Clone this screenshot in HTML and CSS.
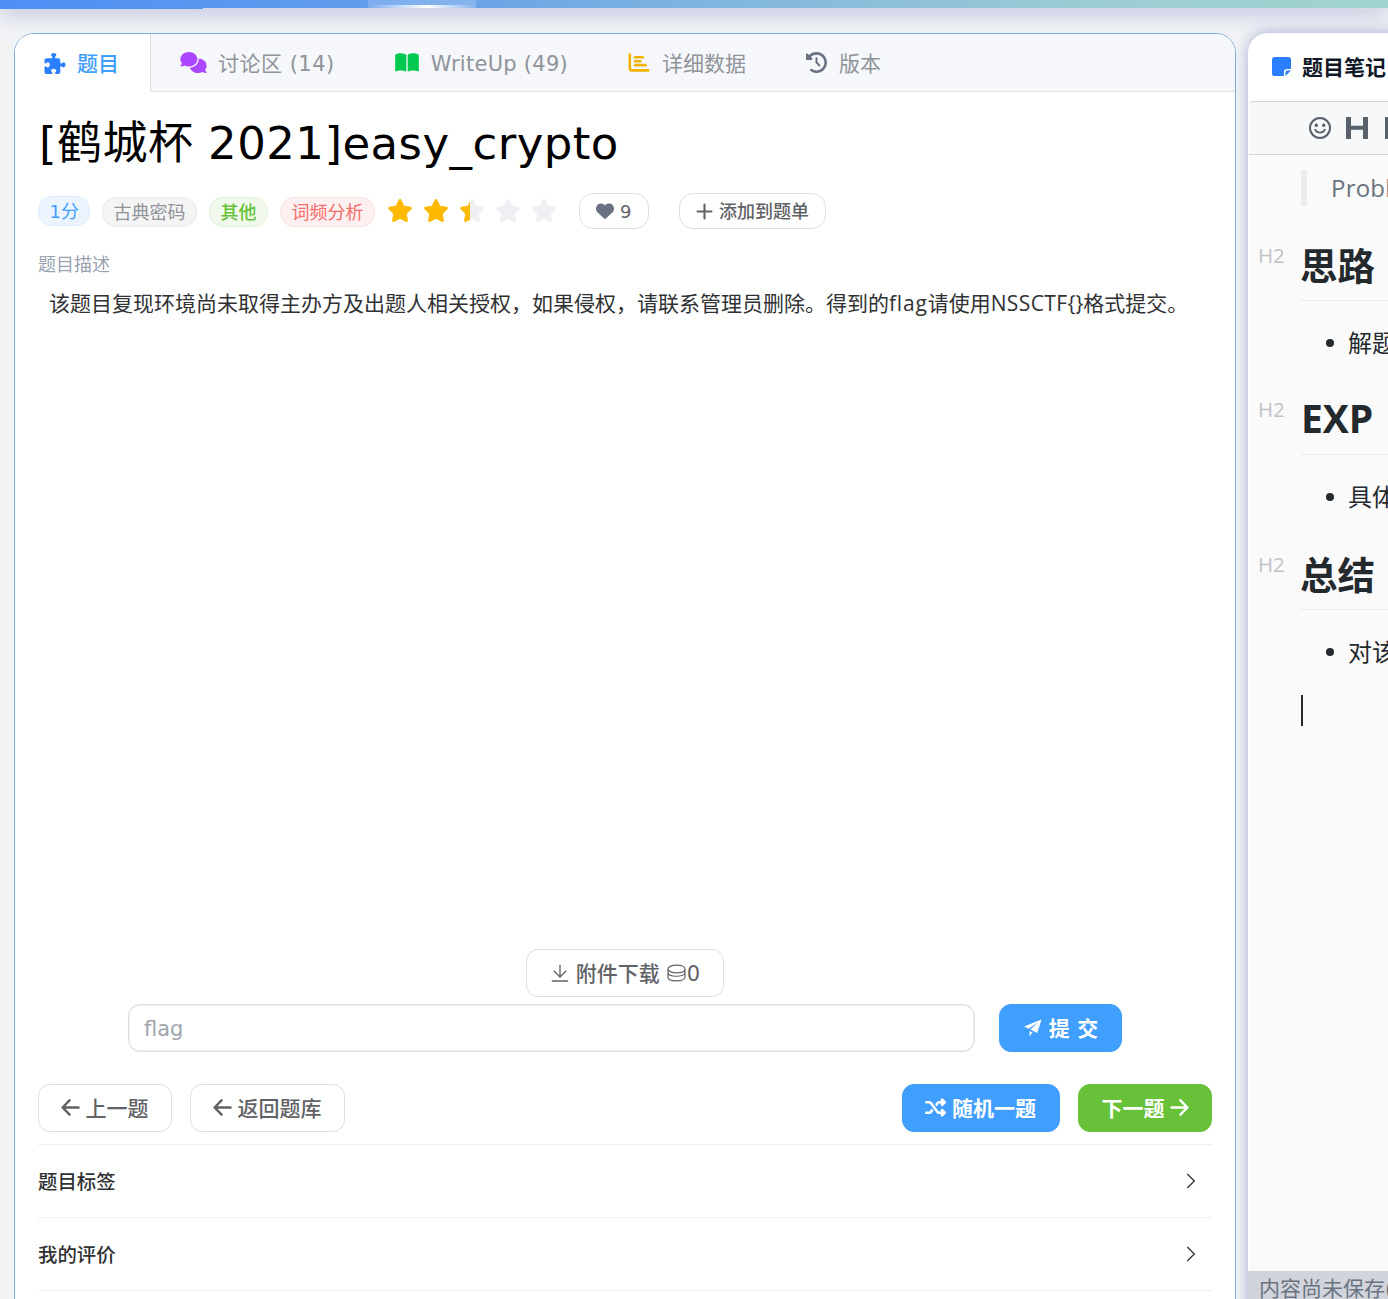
FILE: index.html
```html
<!DOCTYPE html>
<html lang="zh-CN">
<head>
<meta charset="utf-8">
<title>[鹤城杯 2021]easy_crypto</title>
<link rel="stylesheet" href="styles.css">
</head>
<body>
<svg class="defs" aria-hidden="true">
  <symbol id="star" viewBox="24 0 528 512"><path d="M316.9 18C311.6 7 300.4 0 288.1 0s-23.4 7-28.8 18L195 150.3 51.4 171.5c-12 1.8-22 10.2-25.7 21.7s-.7 24.2 7.9 32.7L137.8 329 113.2 474.7c-2 12 3 24.2 12.9 31.3s23 8 33.8 2.3l128.3-68.5 128.3 68.5c10.8 5.7 23.9 4.9 33.8-2.3s14.9-19.3 12.9-31.3L438.5 329 542.7 225.9c8.6-8.5 11.7-21.2 7.9-32.7s-13.7-19.9-25.7-21.7L381.2 150.3 316.9 18z"/></symbol>
  <symbol id="arrow" viewBox="0 0 20 20"><path d="M18.5 10H2.2M9 2.5 1.7 10 9 17.5" fill="none" stroke="currentColor" stroke-width="2.6" stroke-linecap="round" stroke-linejoin="round"/></symbol>
  <symbol id="chevron" viewBox="0 0 10 16"><path d="M1.3 1 8.3 8 1.3 15" fill="none" stroke="currentColor" stroke-width="1.3"/></symbol>
</svg>
<div class="topbar"><span class="topbar-line"></span><span class="topbar-active"></span></div>
<div class="page">
  <main class="problem">
    <nav class="tabs">
      <a class="tab active"><svg class="i-puzzle" viewBox="0 0 512 512"><path d="M192 104.8c0-9.2-5.8-17.3-13.2-22.8C167.2 73.3 160 61.3 160 48c0-26.5 28.7-48 64-48s64 21.5 64 48c0 13.3-7.2 25.3-18.8 34c-7.4 5.5-13.2 13.6-13.2 22.8c0 12.8 10.4 23.2 23.2 23.2H336c26.5 0 48 21.5 48 48v56.8c0 12.8 10.4 23.2 23.2 23.2c9.2 0 17.3-5.8 22.8-13.2c8.7-11.6 20.7-18.8 34-18.8c26.5 0 48 28.7 48 64s-21.5 64-48 64c-13.3 0-25.3-7.2-34-18.8c-5.5-7.4-13.6-13.2-22.8-13.2c-12.8 0-23.2 10.4-23.2 23.2V464c0 26.5-21.5 48-48 48H279.2c-12.8 0-23.2-10.4-23.2-23.2c0-9.2 5.8-17.3 13.2-22.8c11.6-8.7 18.8-20.7 18.8-34c0-26.5-28.7-48-64-48s-64 21.5-64 48c0 13.3 7.2 25.3 18.8 34c7.4 5.5 13.2 13.6 13.2 22.8c0 12.8-10.4 23.2-23.2 23.2H48c-26.5 0-48-21.5-48-48V343.2C0 330.4 10.4 320 23.2 320c9.2 0 17.3 5.8 22.8 13.2C54.7 344.8 66.7 352 80 352c26.5 0 48-28.7 48-64s-21.5-64-48-64c-13.3 0-25.3 7.2-34 18.8C40.5 250.2 32.4 256 23.2 256C10.4 256 0 245.6 0 232.8V176c0-26.5 21.5-48 48-48H168.8c12.8 0 23.2-10.4 23.2-23.2z"/></svg><span>题目</span></a>
      <a class="tab discuss"><svg class="i-comments" viewBox="0 0 640 512"><path d="M208 352c114.9 0 208-78.8 208-176S322.9 0 208 0S0 78.8 0 176c0 38.6 14.7 74.3 39.6 103.4c-3.5 9.4-8.7 17.7-14.2 24.7c-4.8 6.2-9.7 11-13.3 14.3c-1.8 1.6-3.3 2.9-4.3 3.7c-.5 .4-.9 .7-1.1 .8l-.2 .2C1 327.2-1.4 334.4 .8 340.9S9.1 352 16 352c21.8 0 43.8-5.6 62.1-12.5c9.2-3.5 17.8-7.4 25.2-11.4C134.1 343.3 169.8 352 208 352zM448 176c0 112.3-99.1 196.9-216.5 207C255.8 457.4 336.4 512 432 512c38.2 0 73.9-8.7 104.7-23.9c7.5 4 16 7.9 25.2 11.4c18.3 6.9 40.3 12.5 62.1 12.5c6.9 0 13.1-4.5 15.2-11.1c2.1-6.6-.2-13.8-5.8-17.9l-.2-.2c-.2-.2-.6-.4-1.1-.8c-1-.8-2.5-2-4.3-3.7c-3.6-3.3-8.5-8.1-13.3-14.3c-5.5-7-10.7-15.4-14.2-24.7c24.9-29 39.6-64.7 39.6-103.4c0-92.8-84.9-168.9-192.6-175.5c.4 5.1 .6 10.3 .6 15.5z"/></svg><span>讨论区 (14)</span></a>
      <a class="tab writeup"><svg class="i-book" viewBox="0 0 576 512"><path d="M249.6 471.5c10.8 3.8 22.4-4.1 22.4-15.5V78.6c0-4.2-1.6-8.4-5-11C247.4 52 202.4 32 144 32C93.5 32 46.3 45.3 18.1 56.1C6.8 60.5 0 71.7 0 83.8V454.1c0 11.9 12.8 20.2 24.1 16.5C55.6 460.1 105.5 448 144 448c33.9 0 79 14 105.6 23.5zm76.8 0C353 462 398.1 448 432 448c38.5 0 88.4 12.1 119.9 22.6c11.3 3.8 24.1-4.6 24.1-16.5V83.8c0-12.1-6.8-23.3-18.1-27.6C529.7 45.3 482.5 32 432 32c-58.4 0-103.4 20-123 35.6c-3.3 2.6-5 6.8-5 11V456c0 11.4 11.7 19.3 22.4 15.5z"/></svg><span>WriteUp (49)</span></a>
      <a class="tab"><svg class="i-chart" viewBox="0 0 512 512"><path d="M32 32c17.7 0 32 14.3 32 32V400c0 8.8 7.2 16 16 16H480c17.7 0 32 14.3 32 32s-14.3 32-32 32H80c-44.2 0-80-35.8-80-80V64C0 46.3 14.3 32 32 32zm96 96c0-17.7 14.3-32 32-32l192 0c17.7 0 32 14.3 32 32s-14.3 32-32 32l-192 0c-17.7 0-32-14.3-32-32zm32 64H288c17.7 0 32 14.3 32 32s-14.3 32-32 32H160c-17.7 0-32-14.3-32-32s14.3-32 32-32zm0 96H416c17.7 0 32 14.3 32 32s-14.3 32-32 32H160c-17.7 0-32-14.3-32-32s14.3-32 32-32z"/></svg><span>详细数据</span></a>
      <a class="tab"><svg class="i-history" viewBox="0 0 512 512"><path d="M75 75L41 41C25.9 25.9 0 36.6 0 57.9V168c0 13.3 10.7 24 24 24H134.1c21.4 0 32.1-25.9 17-41l-30.8-30.8C155 85.5 203 64 256 64c106 0 192 86 192 192s-86 192-192 192c-40.8 0-78.6-12.7-109.7-34.4c-14.5-10.1-34.4-6.6-44.6 7.9s-6.6 34.4 7.9 44.6C151.2 495 201.7 512 256 512c141.4 0 256-114.6 256-256S397.4 0 256 0C185.3 0 121.3 28.7 75 75zm181 53c-13.3 0-24 10.7-24 24V256c0 6.4 2.5 12.5 7 17l72 72c9.4 9.4 24.6 9.4 33.9 0s9.4-24.6 0-33.9l-65-65V152c0-13.3-10.7-24-24-24z"/></svg><span>版本</span></a>
    </nav>
    <div class="content">
      <h1>[鹤城杯 2021]easy_crypto</h1>
      <div class="meta">
        <span class="tag blue">1分</span><span class="tag gray">古典密码</span><span class="tag green">其他</span><span class="tag red">词频分析</span>
        <div class="stars">
          <svg class="star on"><use href="#star"/></svg><svg class="star on"><use href="#star"/></svg><span class="half"><svg class="star"><use href="#star"/></svg><svg class="star on clip"><use href="#star"/></svg></span><svg class="star"><use href="#star"/></svg><svg class="star"><use href="#star"/></svg>
        </div>
        <button class="pill like"><svg viewBox="0 0 512 512"><path d="M47.6 300.4L228.3 469.1c7.5 7 17.4 10.9 27.7 10.9s20.2-3.9 27.7-10.9L464.4 300.4c30.4-28.3 47.6-68 47.6-109.5v-5.8c0-69.9-50.5-129.5-119.4-141C347 36.5 300.6 51.4 268 84L256 96 244 84c-32.6-32.6-79-47.5-124.6-39.9C50.5 55.6 0 115.2 0 185.1v5.8c0 41.5 17.2 81.2 47.6 109.5z"/></svg><span>9</span></button>
        <button class="pill add"><svg viewBox="0 0 16 16"><path d="M8 1.5v13M1.5 8h13" fill="none" stroke="currentColor" stroke-width="2" stroke-linecap="round"/></svg><span>添加到题单</span></button>
      </div>
      <div class="label">题目描述</div>
      <p class="desc">该题目复现环境尚未取得主办方及出题人相关授权，如果侵权，请联系管理员删除。得到的<span class="word">flag</span>请使用<span class="code">NSSCTF</span>{}格式提交。</p>
      <div class="attach"><button class="btn"><svg class="i-down" viewBox="0 0 18 18"><path d="M9 .8v12M2.8 6.8 9 13l6.2-6.2M.8 17h16.4" fill="none" stroke="currentColor" stroke-width="1.3"/></svg><span>附件下载</span><svg class="i-coin" viewBox="0 0 19 18"><path d="M1 5c0-5.2 17-5.2 17 0S1 10.200 1 5v3.500c0 5 17 5 17 0V5M1 9v4c0 5.200 17 5.200 17 0V9" fill="none" stroke="currentColor" stroke-width="1.200"/></svg><span>0</span></button></div>
      <div class="submit-row"><div class="flag">flag</div><button class="btn primary submit"><svg viewBox="0 0 18 18"><path d="M17.600.4 0 7.400l4.600 2.300L14 3.200 6.400 10.600l6.800 3.400zM5.500 12v5.200l3-3.700z"/></svg><span>提 交</span></button></div>
      <div class="nav-row">
        <button class="btn prev"><svg class="i-arrow"><use href="#arrow"/></svg><span>上一题</span></button>
        <button class="btn back"><svg class="i-arrow"><use href="#arrow"/></svg><span>返回题库</span></button>
        <button class="btn primary random"><svg class="i-shuffle" viewBox="0 0 512 512"><path d="M403.8 34.4c12-5 25.7-2.2 34.9 6.9l64 64c6 6 9.4 14.1 9.4 22.6s-3.4 16.6-9.4 22.6l-64 64c-9.2 9.2-22.9 11.9-34.9 6.9s-19.8-16.6-19.8-29.6V160H352c-10.1 0-19.6 4.7-25.600 12.800L284 229.300 244 176l31.200-41.600C293.300 110.200 321.800 96 352 96h32V64c0-12.900 7.800-24.600 19.800-29.600zM164 282.700L204 336l-31.200 41.600C154.700 401.800 126.200 416 96 416H32c-17.700 0-32-14.300-32-32s14.300-32 32-32H96c10.100 0 19.600-4.700 25.600-12.800L164 282.700zm274.600 188c-9.200 9.200-22.900 11.900-34.900 6.900s-19.800-16.600-19.800-29.600V416H352c-30.200 0-58.700-14.200-76.800-38.400L121.600 172.800c-6-8.100-15.500-12.800-25.600-12.800H32c-17.700 0-32-14.300-32-32s14.300-32 32-32H96c30.200 0 58.700 14.200 76.800 38.400L326.400 339.200c6 8.100 15.500 12.800 25.600 12.800h32V320c0-12.900 7.800-24.600 19.800-29.600s25.700-2.200 34.900 6.900l64 64c6 6 9.400 14.100 9.400 22.600s-3.400 16.600-9.400 22.600l-64 64z"/></svg><span>随机一题</span></button>
        <button class="btn success next"><span>下一题</span><svg class="i-arrow flip"><use href="#arrow"/></svg></button>
      </div>
      <div class="collapse"><span>题目标签</span><svg><use href="#chevron"/></svg></div>
      <div class="collapse"><span>我的评价</span><svg><use href="#chevron"/></svg></div>
      <div class="collapse"></div>
    </div>
  </main>
  <aside class="notes">
    <header class="notes-head"><svg viewBox="0 0 20 20"><path d="M3 0h14a3 3 0 0 1 3 3v9.500h-4a3.500 3.500 0 0 0-3.500 3.500v4H3a3 3 0 0 1-3-3V3a3 3 0 0 1 3-3zM20 14.200 14.200 20v-3.800a2 2 0 0 1 2-2z"/></svg><span>题目笔记</span></header>
    <div class="toolbar">
      <svg class="i-smile" viewBox="0 0 22 22"><g fill="none" stroke="currentColor" stroke-width="2"><circle cx="11" cy="11" r="10"/><path d="M6.200 12.800c2.200 3.800 7.400 3.800 9.600 0" stroke-width="1.800" stroke-linecap="round"/></g><circle cx="7.300" cy="8.300" r="1.700"/><circle cx="14.700" cy="8.300" r="1.700"/></svg>
      <svg class="i-h" viewBox="0 0 22 22"><path d="M0 0h5v8.700h12V0h5v22h-5v-9.300H5V22H0z"/></svg>
      <svg class="i-b" viewBox="0 0 18 22"><path d="M0 0h10a6 6 0 0 1 5 10 6.500 6.500 0 0 1-4 12H0zM5 4v5h5a2 2 0 0 0 0-5zM5 13v5h6a2 2 0 0 0 0-5z"/></svg>
    </div>
    <div class="editor">
      <blockquote>Probl</blockquote>
      <section><i>H2</i><h2>思路</h2><ul><li>解题</li></ul></section>
      <section><i>H2</i><h2 class="latin">EXP</h2><ul><li>具体</li></ul></section>
      <section><i>H2</i><h2>总结</h2><ul><li>对该</li></ul></section>
      <div class="caret"></div>
    </div>
    <footer>内容尚未保存(</footer>
  </aside>
</div>
</body>
</html>
```
FILE: styles.css
```css
* { box-sizing: border-box; }
html, body { margin: 0; height: 1299px; overflow: hidden; }
body {
  background: #f2f3f5;
  font-family: "DejaVu Sans", "Noto Sans CJK SC", sans-serif;
  font-size: 21px;
  color: #303133;
}
svg { display: block; flex: none; fill: currentColor; overflow: visible; }
.defs { position: absolute; width: 0; height: 0; }
button { font: inherit; margin: 0; }

.topbar {
  position: relative;
  height: 9px;
  background: linear-gradient(90deg, #4d8ff5 0%, #629ceb 27%, #7eb4df 50%, #9dcdd3 80%, #a1d3cf 100%);
  box-shadow: 0 0 24px rgba(65, 85, 175, .65);
}
.topbar-line { position: absolute; left: 203px; right: 0; bottom: 0; height: 1px; background: #d9dde8; }
.topbar-active {
  position: absolute; left: 368px; bottom: 1px; width: 108px; height: 8px;
  background: linear-gradient(90deg, transparent, #fff 55%, transparent) bottom / 100% 3px no-repeat, rgba(255, 255, 255, .18);
}

.page { display: flex; gap: 12px; padding: 24px 0 0 14px; height: 1290px; }
.problem {
  width: 1222px; flex: none; height: 1300px;
  border: 1px solid #7db0e0; border-radius: 20px 20px 0 0;
  background: #fff; overflow: hidden;
}
.tabs { display: flex; height: 58px; background: #f5f7fa; border-bottom: 1px solid #e1e4eb; }
.tab { display: flex; align-items: center; gap: 12px; padding: 0 30px; color: #909399; line-height: 60px; white-space: nowrap; }
.tab span { height: 58px; }
.tab svg { height: 21px; }
.tab.active { width: 136px; height: 58px; gap: 11px; padding: 0 0 0 29px; background: #fff; color: #409eff; border-right: 1px solid #dcdfe6; font-weight: 500; }
.tab.discuss { padding-left: 29px; gap: 11px; letter-spacing: .5px; }
.tab.writeup { letter-spacing: .28px; }
.i-puzzle { width: 22px; color: #2b7fff; }
.i-comments { width: 27px; color: #ad46ff; }
.i-book { width: 24px; color: #00c950; }
.i-chart { width: 22px; color: #f0b100; }
.i-history { width: 21px; color: #6a7282; }

.content { padding: 0 23px; }
h1 { margin: 22px 0 0; padding-left: 1px; height: 60px; line-height: 60px; font-size: 45px; font-weight: 400; letter-spacing: .45px; color: #000; white-space: nowrap; }
.meta { display: flex; align-items: center; height: 36px; margin-top: 19px; }
.tag { height: 30px; line-height: 30px; border: 1px solid; border-radius: 14px; padding: 0 10.5px; font-size: 18px; margin: 2px 12px 0 0; white-space: nowrap; }
.blue { width: 52px; margin-top: 0; color: #409eff; background: #ecf5ff; border-color: #d9ecff; }
.gray { width: 95px; color: #909399; background: #f4f4f5; border-color: #e9e9eb; }
.green { width: 59px; color: #67c23a; background: #f0f9eb; border-color: #e1f3d8; font-weight: 500; }
.red { width: 95px; color: #f56c6c; background: #fef0f0; border-color: #fde2e2; }
.stars { display: flex; gap: 12px; margin: -1px 0 0 1px; color: #eff0f4; }
.star { width: 24px; height: 23px; }
.star.on { color: #ffb900; }
.half { position: relative; }
.clip { position: absolute; left: 0; top: 0; clip-path: inset(0 14px 0 0); }
.pill { display: flex; align-items: center; height: 36px; padding: 0 16px; border: 1px solid #dcdfe6; border-radius: 14px; background: #fff; color: #606266; font-size: 18px; line-height: 36px; font-weight: 500; }
.pill span { height: 34px; }
.like { width: 70px; margin-left: 23px; gap: 6px; }
.like svg { width: 18px; height: 18px; color: #6a7282; }
.add { width: 147px; margin-left: 30px; gap: 6px; white-space: nowrap; }
.add svg { width: 17px; height: 17px; }
.label { margin-top: 22px; height: 28px; line-height: 28px; font-size: 18px; color: #99a1af; }
.desc { margin: 7px 0 0 11px; height: 34px; font: 400 21px/34px "Open Sans", "Noto Sans CJK SC", sans-serif; white-space: nowrap; }
.word { letter-spacing: .8px; }
.code { letter-spacing: .4px; }
.attach { display: flex; justify-content: center; margin-top: 629px; }
.btn { display: flex; align-items: center; justify-content: center; gap: 7px; height: 48px; padding: 0; border: 1px solid #dcdfe6; border-radius: 12px; background: #fff; color: #606266; font-weight: 500; line-height: 48px; white-space: nowrap; }
.btn span { height: 46px; }
.attach .btn { width: 198px; padding-left: 1px; }
.i-down { width: 18px; height: 18px; margin-top: -1px; }
.i-coin { width: 19px; height: 18px; margin: -1px -6px 0 0; }
.submit-row { display: flex; gap: 24px; margin: 7px 90px 0; }
.flag { width: 847px; height: 48px; padding-left: 15px; border: 1px solid #dcdfe6; box-shadow: inset 0 0 0 .5px #dcdfe6; border-radius: 12px; line-height: 49px; color: #a1a5ad; }
.primary { background: #409eff; border-color: #409eff; color: #fff; }
.success { background: #67c23a; border-color: #67c23a; color: #fff; }
.primary, .success { font-weight: 700; }
.submit { width: 123px; padding-left: 1px; }
.submit svg { width: 18px; height: 18px; }
.nav-row { display: flex; gap: 18px; margin-top: 32px; padding-bottom: 12px; }
.prev, .next { width: 134px; }
.prev, .back, .random { gap: 6px; padding-right: 1px; }
.back { width: 155px; }
.next { gap: 5px; }
.random { width: 158px; margin-left: auto; }
.i-arrow { width: 19px; height: 19px; margin-top: -1px; }
.flip { transform: scaleX(-1); }
.i-shuffle { width: 21px; height: 21px; margin-top: -1px; }
.collapse { display: flex; align-items: center; justify-content: space-between; height: 73px; padding-right: 16px; border-top: 1px solid #ebeef5; font-size: 19.4px; font-weight: 500; }
.collapse span { padding-bottom: 2px; }
.collapse svg { width: 10px; height: 16px; }

.notes { width: 160px; flex: none; height: 1310px; background: #fff; border-radius: 20px 0 0 0; box-shadow: 0 0 14px rgba(70, 95, 180, .45); display: flex; flex-direction: column; }
.notes-head { display: flex; align-items: center; gap: 11px; height: 68px; padding: 0 0 2px 24px; color: #101828; font-weight: 700; white-space: nowrap; }
.notes-head svg { width: 19px; height: 19px; color: #2b7fff; }
.toolbar { display: flex; align-items: center; gap: 15px; height: 54px; margin-left: 1px; padding-left: 60px; background: #f6f8fa; border-top: 1px solid #d1d5da; border-bottom: 1px solid #d1d5da; border-radius: 4px 0 0 0; color: #586069; }
.i-smile, .i-h { width: 22px; height: 22px; }
.i-b { width: 18px; height: 22px; margin-left: 2px; }
.editor { height: 1116px; margin-left: 1px; padding: 15px 0 0 52px; background: #fafafa; font: 24px/36px "Open Sans", "Noto Sans CJK SC", sans-serif; color: #24292e; overflow: hidden; white-space: nowrap; }
blockquote { margin: 0; height: 36px; padding-left: 24px; border-left: 6px solid #eaecef; color: #6a737d; letter-spacing: .2px; }
section { position: relative; height: 154.400px; padding-top: 36px; }
section i { position: absolute; left: -43px; top: 34px; font-size: 20.5px; line-height: 30px; font-style: normal; color: #bfc3c7; }
h2 { margin: 0 0 0 -1px; height: 59px; border-bottom: 1px solid #eaecef; font-size: 37.5px; line-height: 47px; font-weight: 700; }
.latin { margin-left: 0; font-size: 39px; line-height: 43px; }
ul { margin: 24px 0 0; padding: 0; list-style: none; }
li { display: flex; align-items: center; gap: 14px; padding-left: 25px; height: 36px; }
li::before { content: ""; flex: none; width: 8px; height: 8px; border-radius: 50%; background: #24292e; }
.caret { width: 2px; height: 31px; margin-top: 26px; background: #24292e; }
footer { height: 39px; padding-left: 11px; background: #d1d5db; color: #6a7282; line-height: 36px; white-space: nowrap; overflow: hidden; }
```
